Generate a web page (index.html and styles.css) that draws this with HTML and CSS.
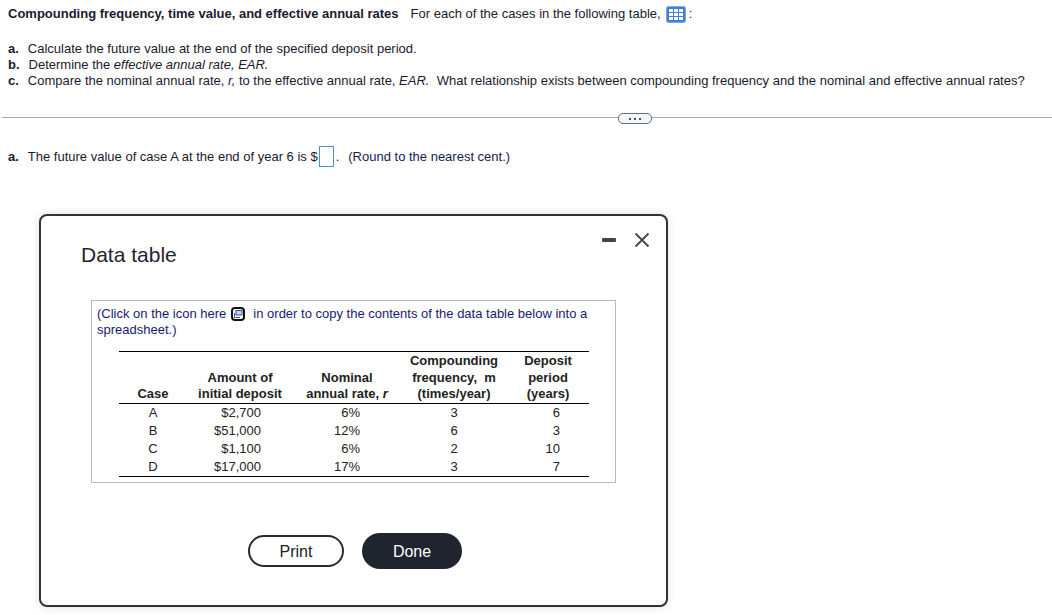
FILE: index.html
```html
<!DOCTYPE html>
<html lang="en">
<head>
  <meta charset="UTF-8">
  <meta name="viewport" content="width=device-width, initial-scale=1.0">
  <title>Data table</title>
  <link rel="stylesheet" href="styles.css">
</head>
<body>

  <div class="intro">
    <b>Compounding frequency, time value, and effective annual rates</b>
    <span class="intro-text">For each of the cases in the following table,</span>
    <svg class="grid-icon" width="20" height="17" viewBox="0 0 20 17">
      <rect x="0.5" y="0.5" width="19" height="16" rx="2" fill="#3f7fd6" stroke="#7fa9e4" stroke-width="1"/>
      <g fill="#fff">
        <rect x="3" y="3" width="4" height="3"/><rect x="8" y="3" width="4" height="3"/><rect x="13" y="3" width="4" height="3"/>
        <rect x="3" y="7" width="4" height="3"/><rect x="8" y="7" width="4" height="3"/><rect x="13" y="7" width="4" height="3"/>
        <rect x="3" y="11" width="4" height="3"/><rect x="8" y="11" width="4" height="3"/><rect x="13" y="11" width="4" height="3"/>
      </g>
    </svg>
    <span>:</span>
  </div>

  <ol class="parts">
    <li><b>a.</b><span>Calculate the future value at the end of the specified deposit period.</span></li>
    <li><b>b.</b><span>Determine the <i>effective annual rate, EAR.</i></span></li>
    <li><b>c.</b><span>Compare the nominal annual rate, <i>r,</i> to the effective annual rate, <i>EAR.</i>&nbsp; What relationship exists between compounding frequency and the nominal and effective annual rates?</span></li>
  </ol>

  <div class="divider">
    <span class="more"><i></i><i></i><i></i></span>
  </div>

  <div class="answer">
    <b>a.</b><span class="answer-text">The future value of case A at the end of year 6 is $</span><span class="answer-box"></span><span>.</span><span class="hint">(Round to the nearest cent.)</span>
  </div>

  <div class="dialog">
    <div class="dialog-head">
      <h2>Data table</h2>
      <div class="dialog-controls">
        <span class="minimize"></span>
        <svg width="16" height="16" viewBox="0 0 16 16"><path d="M1.5 1.5 L14.5 14.5 M14.5 1.5 L1.5 14.5" stroke="#3d4654" stroke-width="1.8" fill="none"/></svg>
      </div>
    </div>

    <div class="table-box">
      <p class="copy-note">(Click on the icon here<svg class="copy-icon" width="14" height="14" viewBox="0 0 14 14">
          <rect x="1" y="1" width="12" height="12" rx="3" fill="#fff" stroke="#111" stroke-width="2"/>
          <rect x="5" y="3.5" width="6" height="4.5" fill="#c9d3ee" stroke="#3a4fa0" stroke-width="1"/>
          <path d="M3.5 6 V10.5 H9" fill="none" stroke="#3a4fa0" stroke-width="1"/>
        </svg>in order to copy the contents of the data table below into a<br>spreadsheet.)</p>

      <table class="cases">
        <thead>
          <tr>
            <th class="col-case">Case</th>
            <th class="col-amount">Amount of<br>initial deposit</th>
            <th class="col-rate">Nominal<br>annual rate, <i>r</i></th>
            <th class="col-freq">Compounding<br>frequency,&nbsp; m<br>(times/year)</th>
            <th class="col-period">Deposit<br>period<br>(years)</th>
          </tr>
        </thead>
        <tbody>
          <tr><td>A</td><td class="amount">$2,700</td><td class="rate">6%</td><td>3</td><td class="period">6</td></tr>
          <tr><td>B</td><td class="amount">$51,000</td><td class="rate">12%</td><td>6</td><td class="period">3</td></tr>
          <tr><td>C</td><td class="amount">$1,100</td><td class="rate">6%</td><td>2</td><td class="period">10</td></tr>
          <tr><td>D</td><td class="amount">$17,000</td><td class="rate">17%</td><td>3</td><td class="period">7</td></tr>
        </tbody>
      </table>
    </div>

    <div class="dialog-buttons">
      <button class="btn-print">Print</button>
      <button class="btn-done">Done</button>
    </div>
  </div>

</body>
</html>
```

FILE: styles.css
```css
body {
  font-family: 'Liberation Sans', Arial, sans-serif;
  font-size: 13px;
  color: #1a1a2e;
  background-color: #fff;
  height: 615px;
  margin: 0;
  overflow: hidden;
}

.intro {
  display: flex;
  align-items: center;
  height: 17px;
  padding: 5px 0 1px 8px;
}

.intro-text {
  margin-left: 12px;
}

.grid-icon {
  margin: 2px 0 0 5px;
}

.intro span:last-child {
  margin-left: 3px;
}

.parts {
  list-style: none;
  margin: 18px 0 0 8px;
  padding: 0;
  line-height: 16px;
}

.parts li span {
  margin-left: 9px;
}

.divider {
  position: relative;
  height: 1px;
  margin: 28px 0 0 2px;
  background-color: #b5a3ac;
}

.more {
  position: absolute;
  left: 616px;
  top: -4px;
  width: 32px;
  height: 9px;
  display: flex;
  align-items: center;
  justify-content: center;
  gap: 3px;
  background-color: #f4f6f8;
  border: 1px solid #5f7080;
  border-radius: 5px;
}

.more i {
  width: 2px;
  height: 2px;
  background-color: #44525f;
}

.answer {
  display: flex;
  align-items: center;
  height: 22px;
  margin: 27px 0 1px 8px;
}

.answer-text {
  margin-left: 9px;
}

.answer-box {
  box-sizing: border-box;
  width: 15px;
  height: 21px;
  border: 1px solid #4a90d9;
  margin: 0 2px 0 1px;
}

.hint {
  margin-left: 9px;
  color: #1a1a4e;
}

.dialog {
  box-sizing: border-box;
  width: 629px;
  height: 393px;
  margin: 47px 0 0 39px;
  padding: 0 16px 0 41px;
  background-color: #fff;
  border: 2px solid #333;
  border-radius: 8px;
  box-shadow: 0 0 10px rgba(0, 0, 0, 0.12);
}

.dialog-head {
  display: flex;
  justify-content: space-between;
  height: 84px;
}

.dialog-head h2 {
  font-size: 21px;
  font-weight: normal;
  margin: 27px 0 0 -1px;
  color: #1f2530;
}

.dialog-controls {
  display: flex;
  align-items: center;
  gap: 18px;
  height: 16px;
  margin-top: 16px;
}

.minimize {
  width: 14px;
  height: 4px;
  background-color: #3d4654;
  border-radius: 1px;
}

.table-box {
  box-sizing: border-box;
  width: 525px;
  height: 183px;
  margin-left: 9px;
  padding: 5px 0 0 5px;
  border: 1px solid #bbb;
}

.copy-note {
  margin: 0;
  line-height: 16px;
  color: #1a1a70;
}

.copy-icon {
  vertical-align: -3px;
  margin: 0 8px 0 5px;
}

.cases {
  border-collapse: collapse;
  width: 470px;
  margin: 13px 0 0 22px;
  color: #222;
  table-layout: fixed;
  border-top: 1px solid #000;
  border-bottom: 1px solid #000;
}

.cases th {
  font-weight: bold;
  line-height: 16.5px;
  padding: 1px 0 0;
  vertical-align: bottom;
  border-bottom: 1px solid #000;
}

.cases td {
  text-align: center;
  height: 18px;
  padding: 0;
  line-height: 18px;
}

.col-case { width: 68px; }
.col-amount { width: 106px; }
.col-rate { width: 108px; }
.col-freq { width: 106px; }

.cases td.amount {
  text-align: right;
  padding-right: 32px;
}

.cases td.rate {
  text-align: right;
  padding-right: 41px;
}

.cases td.period {
  text-align: right;
  padding-right: 29px;
}

.dialog-buttons {
  display: flex;
  align-items: center;
  gap: 18px;
  margin: 50px 0 0 166px;
}

.dialog-buttons button {
  font-family: 'Liberation Sans', Arial, sans-serif;
  font-size: 16px;
  padding: 1px 0 0;
  border-radius: 18px;
  cursor: pointer;
}

.btn-print {
  width: 96px;
  height: 32px;
  color: #222;
  background-color: #fff;
  border: 2px solid #252b37;
}

.btn-done {
  width: 100px;
  height: 36px;
  color: #fff;
  background-color: #20242f;
  border: none;
}
```
